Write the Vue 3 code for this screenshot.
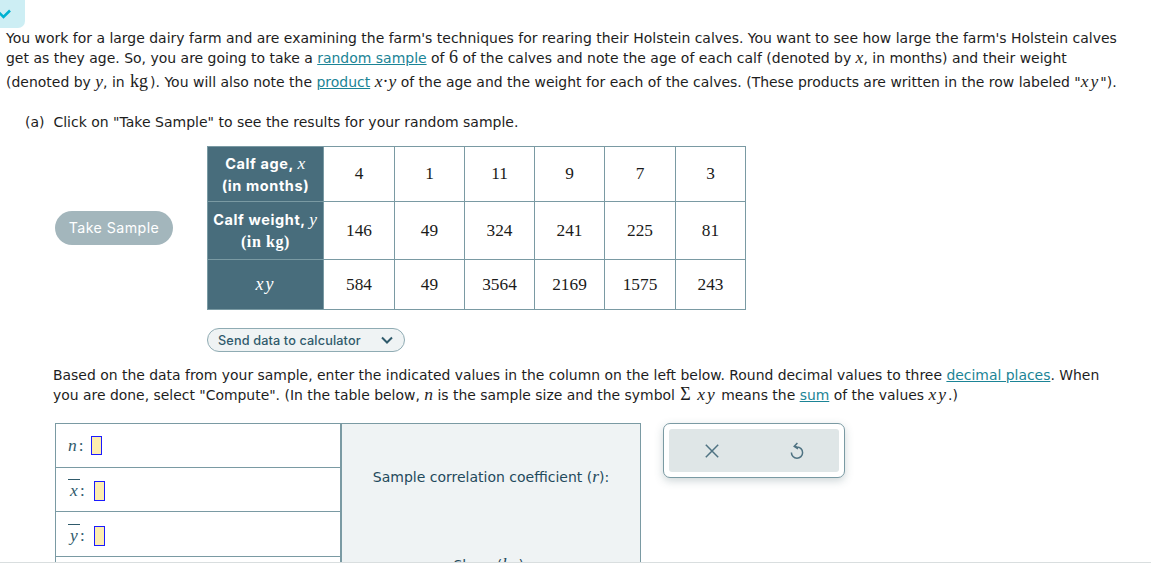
<script setup>
const rows = [
  { cls: 'r1', label: 'Calf age, ', v: 'x', sub: '(in months)', vals: [4, 1, 11, 9, 7, 3] },
  { cls: 'r2', label: 'Calf weight, ', v: 'y', sub: '(in kg)', vals: [146, 49, 324, 241, 225, 81] },
  { cls: 'r3', label: '', v: 'xy', sub: '', vals: [584, 49, 3564, 2169, 1575, 243] }
]
</script>

<template>
  <div class="page">
    <div class="corner">
      <svg width="16" height="12" viewBox="0 0 16 12"><path d="M-1 4.5 L3.5 9 L10 2.5" fill="none" stroke="#00b2d1" stroke-width="2.6" /></svg>
    </div>

    <div class="intro">
      <div>You work for a large dairy farm and are examining the farm's techniques for rearing their Holstein calves. You want to see how large the farm's Holstein calves</div>
      <div>get as they age. So, you are going to take a <a>random sample</a> of <span class="num">6</span> of the calves and note the age of each calf (denoted by <i class="m">x</i>, in months) and their weight</div>
      <div class="third">(denoted by <i class="m">y</i>, in <span class="num kgm">kg</span>). You will also note the <a>product</a> <i class="m">x</i><span class="num">·</span><i class="m">y</i> of the age and the weight for each of the calves. (These products are written in the row labeled "<i class="m sp">xy</i>").</div>
    </div>

    <p class="part">(a)&nbsp; Click on "Take Sample" to see the results for your random sample.</p>

    <div class="sample">
      <button class="take">Take Sample</button>
      <div>
        <table class="data">
          <tr v-for="r in rows" :key="r.cls" :class="r.cls">
            <th>
              <template v-if="r.label">{{ r.label }}<i class="m thin">{{ r.v }}</i><br><span :class="{ kg: r.cls === 'r2' }">{{ r.sub }}</span></template>
              <i v-else class="m sp big">{{ r.v }}</i>
            </th>
            <td v-for="(n, i) in r.vals" :key="i">{{ n }}</td>
          </tr>
        </table>
        <div class="send">
          <span>Send data to calculator</span>
          <svg width="14" height="9" viewBox="0 0 14 9"><path d="M2 1.5 L7 6.5 L12 1.5" fill="none" stroke="#2f5a6b" stroke-width="2" /></svg>
        </div>
      </div>
    </div>

    <p class="based">
      Based on the data from your sample, enter the indicated values in the column on the left below. Round decimal values to three <a>decimal places</a>. When<br>
      you are done, select "Compute". (In the table below, <i class="m">n</i> is the sample size and the symbol <span class="num sigma">Σ</span> <i class="m sp">xy</i> means the <a>sum</a> of the values <i class="m sp">xy</i>.)
    </p>

    <div class="bottom">
      <div class="inputs">
        <div class="row first"><i class="m">n</i><span class="colon">:</span><span class="box"></span></div>
        <div class="row"><i class="m bar">x</i><span class="colon">:</span><span class="box tall"></span></div>
        <div class="row"><i class="m bar">y</i><span class="colon">:</span><span class="box tall"></span></div>
        <div class="row"></div>
      </div>
      <div class="result">
        <div class="coef">Sample correlation coefficient (<i class="m">r</i>):</div>
        <div class="slope">Slope (<i class="m">b</i><sub>1</sub>):</div>
      </div>
      <div class="tools">
        <div class="tools-in">
          <svg width="14" height="14" viewBox="0 0 14 14"><path d="M0.8 0.8 L13.2 13.2 M13.2 0.8 L0.8 13.2" fill="none" stroke="#4f7383" stroke-width="1.5" /></svg>
          <svg width="14" height="17" viewBox="0 0 14 17"><path d="M1.4 10.5 A5.6 5.6 0 1 0 7 5 L5 4.6 M7.4 1 L4.2 4.4 L8 7" fill="none" stroke="#4f7383" stroke-width="1.5" /></svg>
        </div>
      </div>
    </div>
  </div>
</template>

<style>
html, body {
  margin: 0;
  background: #fff;
  overflow: hidden;
}
</style>

<style scoped>
.page {
  position: relative;
  height: 563px;
  overflow: hidden;
  box-sizing: border-box;
  border-bottom: 1px solid #d9dedf;
  font-family: "DejaVu Sans", Verdana, sans-serif;
  font-size: 14px;
  color: #1d1d1d;
}
.corner {
  position: absolute;
  left: 0;
  top: 0;
  width: 25px;
  height: 28px;
  background: #cdeef4;
  border-bottom-right-radius: 7px;
}
.corner svg {
  position: absolute;
  left: 0;
  top: 8px;
}
p {
  margin: 0;
}
a {
  color: #1b8496;
  text-decoration: underline;
}
.m {
  font-family: "Liberation Serif", "Times New Roman", serif;
  font-style: italic;
  font-size: 17.5px;
  line-height: 1;
}
.sp {
  letter-spacing: 2px;
}
.num {
  font-family: "Liberation Serif", "Times New Roman", serif;
  font-size: 18px;
  line-height: 1;
}
.kgm {
  margin: 0 2px 0 1px;
}
.sigma {
  margin: 0 2px 0 1px;
}
.intro {
  padding: 28px 0 0 6px;
  font-size: 13.98px;
  line-height: 20px;
  white-space: nowrap;
}
.third {
  margin-top: 4px;
}
.part {
  margin: 20px 0 0 25px;
  line-height: 20px;
}
.sample {
  display: flex;
  margin: 14px 0 0 55px;
}
.take {
  width: 118px;
  height: 34px;
  margin: 65px 34px 0 0;
  padding: 0 0 2px;
  border: none;
  border-radius: 17px;
  background: #a3b6bc;
  color: #fff;
  font-family: Inter, sans-serif;
  font-size: 14.2px;
  letter-spacing: 0.45px;
}
.data {
  border-collapse: collapse;
  table-layout: fixed;
  width: 538px;
}
.data th,
.data td {
  border: 1px solid #7a9aa3;
  padding: 0;
  text-align: center;
}
.data th {
  width: 115px;
  background: #486d7c;
  color: #fff;
  font-family: Inter, sans-serif;
  font-size: 14.5px;
  font-weight: 700;
  line-height: 22px;
  letter-spacing: 0.6px;
}
.data td {
  width: 69px;
  font-family: "Liberation Serif", "Times New Roman", serif;
  font-size: 17.3px;
  color: #1a1a1a;
}
.data td:nth-child(2),
.data td:nth-child(6) {
  width: 70px;
}
.r1 { height: 55px; }
.r2 { height: 58px; }
.r3 { height: 50px; }
.r1 th {
  padding-top: 2px;
}
.r2 th {
  padding-top: 1px;
}
.kg {
  font-family: "Liberation Serif", serif;
  font-size: 16px;
}
.thin {
  font-weight: 400;
}
.big {
  font-size: 18px;
  font-weight: 400;
}
.send {
  display: flex;
  align-items: center;
  justify-content: space-between;
  box-sizing: border-box;
  width: 198px;
  height: 24px;
  margin-top: 18px;
  padding: 0 10px;
  border: 1px solid #8fabb3;
  border-radius: 12px;
  background: #eff3f4;
  color: #2f5a6b;
  font-family: Inter, sans-serif;
  font-size: 12.7px;
  font-weight: 500;
  letter-spacing: 0.13px;
}
.based {
  margin: 13px 0 0 53px;
  font-size: 13.93px;
  line-height: 20px;
  white-space: nowrap;
}
.bottom {
  display: flex;
  align-items: flex-start;
  margin: 18px 0 0 55px;
}
.inputs {
  box-sizing: border-box;
  width: 287px;
  height: 140px;
  border: 1px solid #7a9aa3;
  border-right-width: 2px;
  border-bottom: none;
}
.row {
  display: flex;
  align-items: center;
  box-sizing: border-box;
  height: 44px;
  padding: 3px 0 0 12px;
  border-bottom: 1px solid #7a9aa3;
  color: #2f5a6b;
}
.row.first {
  padding-top: 0;
}
.row.first .colon {
  margin: 0 7px 0 2px;
}
.row:nth-child(3) {
  height: 45px;
}
.colon {
  margin: 0 8px 0 0;
  font-family: "Liberation Serif", serif;
  font-size: 17px;
  letter-spacing: 1px;
}
.bar {
  position: relative;
  display: inline-block;
  width: 12px;
  text-align: center;
}
.bar::before {
  content: "";
  position: absolute;
  left: 0;
  top: -3px;
  width: 12px;
  height: 1px;
  background: #2f5a6b;
}
.box {
  box-sizing: border-box;
  width: 11px;
  height: 19px;
  border: 1px solid #1a1aff;
  background: #fdedb0;
}
.tall {
  height: 20px;
}
.result {
  box-sizing: border-box;
  width: 299px;
  height: 140px;
  border: 1px solid #7a9aa3;
  border-left: none;
  border-bottom: none;
  background: #eff3f4;
  color: #1f4a5c;
  text-align: center;
}
.coef {
  margin-top: 43px;
  line-height: 20px;
}
.slope {
  margin-top: 68px;
  line-height: 20px;
}
.tools {
  box-sizing: border-box;
  width: 182px;
  height: 55px;
  margin-left: 22px;
  padding: 5px;
  border: 1px solid #7a9aa3;
  border-radius: 7px;
  background: #fff;
  box-shadow: 0 3px 8px rgba(60, 90, 100, 0.25);
}
.tools-in {
  display: flex;
  align-items: center;
  justify-content: space-around;
  height: 43px;
  border-radius: 3px;
  background: #dfe6e7;
}
</style>
